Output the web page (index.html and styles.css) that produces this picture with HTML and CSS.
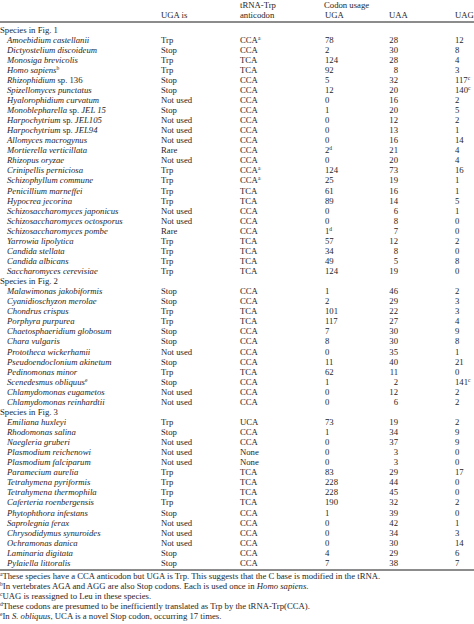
FILE: index.html
```html
<!DOCTYPE html>
<html>
<head>
<meta charset="utf-8">
<link rel="stylesheet" href="styles.css">
</head>
<body>
<div class="page">
<table class="tbl">
<colgroup><col class="c1"><col class="c2"><col class="c3"><col class="c4"><col class="c5"><col class="c6"></colgroup>
<thead>
<tr><th></th><th></th><th>tRNA-Trp</th><th colspan="3" class="cu">Codon usage</th></tr>
<tr class="hlast"><th></th><th>UGA is</th><th>anticodon</th><th class="n4">UGA</th><th class="h5">UAA</th><th class="n6">UAG</th></tr>
</thead>
<tbody>
<tr class="first"><td class="grp" colspan="6">Species in Fig. 1</td></tr>
<tr><td class="sp"><i>Amoebidium castellanii</i></td><td>Trp</td><td>CCA<sup>a</sup></td><td class="n4">78</td><td class="n5">28</td><td class="n6">12</td></tr>
<tr><td class="sp"><i>Dictyostelium discoideum</i></td><td>Stop</td><td>CCA</td><td class="n4">2</td><td class="n5">30</td><td class="n6">8</td></tr>
<tr><td class="sp"><i>Monosiga brevicolis</i></td><td>Trp</td><td>TCA</td><td class="n4">124</td><td class="n5">28</td><td class="n6">4</td></tr>
<tr><td class="sp"><i>Homo sapiens</i><sup>b</sup></td><td>Trp</td><td>TCA</td><td class="n4">92</td><td class="n5">8</td><td class="n6">3</td></tr>
<tr><td class="sp"><i>Rhizophidium</i> sp. 136</td><td>Stop</td><td>CCA</td><td class="n4">5</td><td class="n5">32</td><td class="n6">117<sup>c</sup></td></tr>
<tr><td class="sp"><i>Spizellomyces punctatus</i></td><td>Stop</td><td>CCA</td><td class="n4">12</td><td class="n5">20</td><td class="n6">140<sup>c</sup></td></tr>
<tr><td class="sp"><i>Hyalorophidium curvatum</i></td><td>Not used</td><td>CCA</td><td class="n4">0</td><td class="n5">16</td><td class="n6">2</td></tr>
<tr><td class="sp"><i>Monoblepharella</i> sp. <i>JEL 15</i></td><td>Stop</td><td>CCA</td><td class="n4">1</td><td class="n5">20</td><td class="n6">5</td></tr>
<tr><td class="sp"><i>Harpochytrium</i> sp. <i>JEL105</i></td><td>Not used</td><td>CCA</td><td class="n4">0</td><td class="n5">12</td><td class="n6">2</td></tr>
<tr><td class="sp"><i>Harpochytrium</i> sp. <i>JEL94</i></td><td>Not used</td><td>CCA</td><td class="n4">0</td><td class="n5">13</td><td class="n6">1</td></tr>
<tr><td class="sp"><i>Allomyces macrogynus</i></td><td>Not used</td><td>CCA</td><td class="n4">0</td><td class="n5">16</td><td class="n6">14</td></tr>
<tr><td class="sp"><i>Mortierella verticillata</i></td><td>Rare</td><td>CCA</td><td class="n4">2<sup>d</sup></td><td class="n5">21</td><td class="n6">4</td></tr>
<tr><td class="sp"><i>Rhizopus oryzae</i></td><td>Not used</td><td>CCA</td><td class="n4">0</td><td class="n5">20</td><td class="n6">4</td></tr>
<tr><td class="sp"><i>Crinipellis perniciosa</i></td><td>Trp</td><td>CCA<sup>a</sup></td><td class="n4">124</td><td class="n5">73</td><td class="n6">16</td></tr>
<tr><td class="sp"><i>Schizophyllum commune</i></td><td>Trp</td><td>CCA<sup>a</sup></td><td class="n4">25</td><td class="n5">19</td><td class="n6">1</td></tr>
<tr><td class="sp"><i>Penicillium marneffei</i></td><td>Trp</td><td>TCA</td><td class="n4">61</td><td class="n5">16</td><td class="n6">1</td></tr>
<tr><td class="sp"><i>Hypocrea jecorina</i></td><td>Trp</td><td>TCA</td><td class="n4">89</td><td class="n5">14</td><td class="n6">5</td></tr>
<tr><td class="sp"><i>Schizosaccharomyces japonicus</i></td><td>Not used</td><td>CCA</td><td class="n4">0</td><td class="n5">6</td><td class="n6">1</td></tr>
<tr><td class="sp"><i>Schizosaccharomyces octosporus</i></td><td>Not used</td><td>CCA</td><td class="n4">0</td><td class="n5">8</td><td class="n6">0</td></tr>
<tr><td class="sp"><i>Schizosaccharomyces pombe</i></td><td>Rare</td><td>CCA</td><td class="n4">1<sup>d</sup></td><td class="n5">7</td><td class="n6">0</td></tr>
<tr><td class="sp"><i>Yarrowia lipolytica</i></td><td>Trp</td><td>TCA</td><td class="n4">57</td><td class="n5">12</td><td class="n6">2</td></tr>
<tr><td class="sp"><i>Candida stellata</i></td><td>Trp</td><td>TCA</td><td class="n4">34</td><td class="n5">8</td><td class="n6">0</td></tr>
<tr><td class="sp"><i>Candida albicans</i></td><td>Trp</td><td>TCA</td><td class="n4">49</td><td class="n5">5</td><td class="n6">8</td></tr>
<tr><td class="sp"><i>Saccharomyces cerevisiae</i></td><td>Trp</td><td>TCA</td><td class="n4">124</td><td class="n5">19</td><td class="n6">0</td></tr>
<tr><td class="grp" colspan="6">Species in Fig. 2</td></tr>
<tr><td class="sp"><i>Malawimonas jakobiformis</i></td><td>Stop</td><td>CCA</td><td class="n4">1</td><td class="n5">46</td><td class="n6">2</td></tr>
<tr><td class="sp"><i>Cyanidioschyzon merolae</i></td><td>Stop</td><td>CCA</td><td class="n4">2</td><td class="n5">29</td><td class="n6">3</td></tr>
<tr><td class="sp"><i>Chondrus crispus</i></td><td>Trp</td><td>TCA</td><td class="n4">101</td><td class="n5">22</td><td class="n6">3</td></tr>
<tr><td class="sp"><i>Porphyra purpurea</i></td><td>Trp</td><td>TCA</td><td class="n4">117</td><td class="n5">27</td><td class="n6">4</td></tr>
<tr><td class="sp"><i>Chaetosphaeridium globosum</i></td><td>Stop</td><td>CCA</td><td class="n4">7</td><td class="n5">30</td><td class="n6">9</td></tr>
<tr><td class="sp"><i>Chara vulgaris</i></td><td>Stop</td><td>CCA</td><td class="n4">8</td><td class="n5">30</td><td class="n6">8</td></tr>
<tr><td class="sp"><i>Prototheca wickerhamii</i></td><td>Not used</td><td>CCA</td><td class="n4">0</td><td class="n5">35</td><td class="n6">1</td></tr>
<tr><td class="sp"><i>Pseudoendoclonium akinetum</i></td><td>Stop</td><td>CCA</td><td class="n4">11</td><td class="n5">40</td><td class="n6">21</td></tr>
<tr><td class="sp"><i>Pedinomonas minor</i></td><td>Trp</td><td>TCA</td><td class="n4">62</td><td class="n5">11</td><td class="n6">0</td></tr>
<tr><td class="sp"><i>Scenedesmus obliquus</i><sup>e</sup></td><td>Stop</td><td>CCA</td><td class="n4">1</td><td class="n5">2</td><td class="n6">141<sup>c</sup></td></tr>
<tr><td class="sp"><i>Chlamydomonas eugametos</i></td><td>Not used</td><td>CCA</td><td class="n4">0</td><td class="n5">12</td><td class="n6">2</td></tr>
<tr><td class="sp"><i>Chlamydomonas reinhardtii</i></td><td>Not used</td><td>CCA</td><td class="n4">0</td><td class="n5">6</td><td class="n6">2</td></tr>
<tr><td class="grp" colspan="6">Species in Fig. 3</td></tr>
<tr><td class="sp"><i>Emiliana huxleyi</i></td><td>Trp</td><td>UCA</td><td class="n4">73</td><td class="n5">19</td><td class="n6">2</td></tr>
<tr><td class="sp"><i>Rhodomonas salina</i></td><td>Stop</td><td>CCA</td><td class="n4">1</td><td class="n5">34</td><td class="n6">9</td></tr>
<tr><td class="sp"><i>Naegleria gruberi</i></td><td>Not used</td><td>CCA</td><td class="n4">0</td><td class="n5">37</td><td class="n6">9</td></tr>
<tr><td class="sp"><i>Plasmodium reichenowi</i></td><td>Not used</td><td>None</td><td class="n4">0</td><td class="n5">3</td><td class="n6">0</td></tr>
<tr><td class="sp"><i>Plasmodium falciparum</i></td><td>Not used</td><td>None</td><td class="n4">0</td><td class="n5">3</td><td class="n6">0</td></tr>
<tr><td class="sp"><i>Paramecium aurelia</i></td><td>Trp</td><td>TCA</td><td class="n4">83</td><td class="n5">29</td><td class="n6">17</td></tr>
<tr><td class="sp"><i>Tetrahymena pyriformis</i></td><td>Trp</td><td>TCA</td><td class="n4">228</td><td class="n5">44</td><td class="n6">0</td></tr>
<tr><td class="sp"><i>Tetrahymena thermophila</i></td><td>Trp</td><td>TCA</td><td class="n4">228</td><td class="n5">45</td><td class="n6">0</td></tr>
<tr><td class="sp"><i>Caferteria roenbergensis</i></td><td>Trp</td><td>TCA</td><td class="n4">190</td><td class="n5">32</td><td class="n6">2</td></tr>
<tr><td class="sp"><i>Phytophthora infestans</i></td><td>Stop</td><td>CCA</td><td class="n4">1</td><td class="n5">39</td><td class="n6">0</td></tr>
<tr><td class="sp"><i>Saprolegnia ferax</i></td><td>Not used</td><td>CCA</td><td class="n4">0</td><td class="n5">42</td><td class="n6">1</td></tr>
<tr><td class="sp"><i>Chrysodidymus synuroides</i></td><td>Not used</td><td>CCA</td><td class="n4">0</td><td class="n5">34</td><td class="n6">3</td></tr>
<tr><td class="sp"><i>Ochramonas danica</i></td><td>Not used</td><td>CCA</td><td class="n4">0</td><td class="n5">30</td><td class="n6">14</td></tr>
<tr><td class="sp"><i>Laminaria digitata</i></td><td>Stop</td><td>CCA</td><td class="n4">4</td><td class="n5">29</td><td class="n6">6</td></tr>
<tr class="last"><td class="sp"><i>Pylaiella littoralis</i></td><td>Stop</td><td>CCA</td><td class="n4">7</td><td class="n5">38</td><td class="n6">7</td></tr>
</tbody>
</table>
<div class="notes">
<p><sup>a</sup>These species have a CCA anticodon but UGA is Trp. This suggests that the C base is modified in the tRNA.</p>
<p><sup>b</sup>In vertebrates AGA and AGG are also Stop codons. Each is used once in <i>Homo sapiens</i>.</p>
<p><sup>c</sup>UAG is reassigned to Leu in these species.</p>
<p><sup>d</sup>These codons are presumed to be inefficiently translated as Trp by the tRNA-Trp(CCA).</p>
<p><sup>e</sup>In <i>S. obliquus</i>, UCA is a novel Stop codon, occurring 17 times.</p>
</div>
</div>
</body>
</html>
```

FILE: styles.css
```css
html, body {
  margin: 0;
  padding: 0;
  background: #fff;
  overflow: hidden;
}
.page {
  width: 490px;
  font-family: "Liberation Serif", "Times New Roman", serif;
  font-size: 8.7px;
  color: #262626;
  line-height: 10px;
}
.tbl {
  border-collapse: collapse;
  table-layout: fixed;
  width: 490px;
}
.c1 { width: 161px; }
.c2 { width: 79px; }
.c3 { width: 84px; }
.c4 { width: 50px; }
.c5 { width: 36px; }
.c6 { width: 80px; }
.tbl th, .tbl td {
  padding: 0;
  height: 10.06px;
  line-height: 10.06px;
  font-weight: normal;
  text-align: left;
  vertical-align: middle;
  white-space: nowrap;
  overflow: visible;
}
.tbl thead th { height: 10px; line-height: 10px; }
.tbl thead tr.hlast th {
  border-bottom: 2px solid #8c8c8c;
  padding-bottom: 1px;
}
.tbl tr.first td { padding-top: 1.5px; }
.tbl tr.last td {
  border-bottom: 2px solid #8c8c8c;
  padding-bottom: 1px;
}
.tbl .cu { padding-left: 0; }
.tbl .sp { padding-left: 7px; }
.tbl .grp { padding-left: 0; }
.tbl .n4 { padding-left: 1px; }
.tbl .h5 { padding-left: 15px; }
.tbl .n5 { text-align: right; padding-right: 12px; }
.tbl .n6 { padding-left: 45px; }
sup {
  font-size: 5.5px;
  line-height: 0;
  vertical-align: 3px;
}
.notes p {
  margin: 0;
  line-height: 10px;
}
```
